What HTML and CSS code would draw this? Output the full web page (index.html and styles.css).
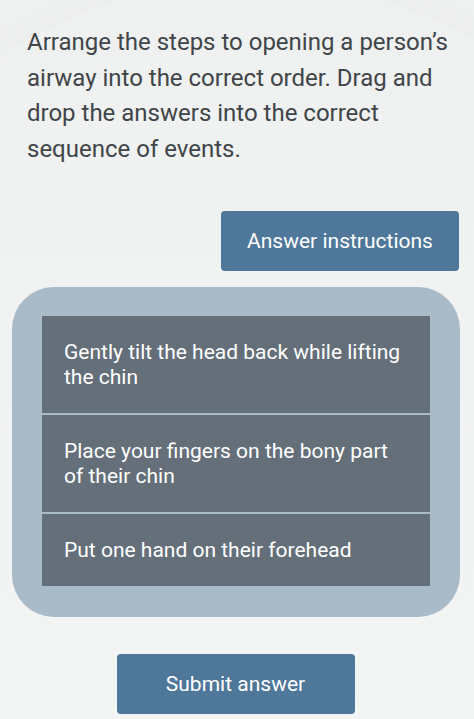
FILE: index.html
```html
<!DOCTYPE html>
<html lang="en">
<head>
    <meta charset="UTF-8">
    <meta name="viewport" content="width=device-width, initial-scale=1.0">
    <title>Opening the airway</title>
    <link rel="stylesheet" href="styles.css">
</head>
<body>
    <main class="question">
        <p class="question-text">Arrange the steps to opening a person’s airway into the correct order. Drag and drop the answers into the correct sequence of events.</p>

        <div class="instructions-row">
            <button class="button">Answer instructions</button>
        </div>

        <div class="sort-area">
            <ul class="sort-list">
                <li class="sort-item">Gently tilt the head back while lifting the chin</li>
                <li class="sort-item">Place your fingers on the bony part of their chin</li>
                <li class="sort-item">Put one hand on their forehead</li>
            </ul>
        </div>

        <div class="submit-row">
            <button class="button">Submit answer</button>
        </div>
    </main>
</body>
</html>
```

FILE: styles.css
```css
html, body {
    height: 100%;
}
body {
    font-family: 'Roboto', 'Liberation Sans', sans-serif;
    margin: 0;
    padding: 0;
    background-color: #f1f2f2;
    background-image:
        radial-gradient(circle at 250px 420px, transparent 0, transparent 440px, rgba(0,0,0,0.012) 441px, transparent 470px),
        linear-gradient(#eff0f0, #f3f4f4);
    color: #404549;
    overflow: hidden;
}
.question {
    padding: 25px 14px 0 12px;
}
.question-text {
    margin: 0 0 44px;
    padding-left: 15px;
    padding-right: 10px;
    font-size: 24px;
    line-height: 35.5px;
}
.instructions-row {
    display: flex;
    justify-content: flex-end;
    margin-right: 1px;
}
.button {
    width: 238px;
    height: 60px;
    background-color: #4f7799;
    color: #fff;
    border: none;
    border-radius: 4px;
    font-family: inherit;
    font-size: 21px;
    cursor: pointer;
}
.sort-area {
    margin-top: 16px;
    padding: 29px 30px 31px;
    background-color: #a9bbc9;
    border-radius: 42px;
}
.sort-list {
    list-style: none;
    margin: 0;
    padding: 0;
    display: flex;
    flex-direction: column;
    gap: 2px;
}
.sort-item {
    background-color: #656f79;
    color: #fff;
    padding: 24px 22px 23px;
    font-size: 21px;
    line-height: 25px;
}
.submit-row {
    display: flex;
    justify-content: center;
    margin-top: 37px;
    margin-left: -1px;
}
```
